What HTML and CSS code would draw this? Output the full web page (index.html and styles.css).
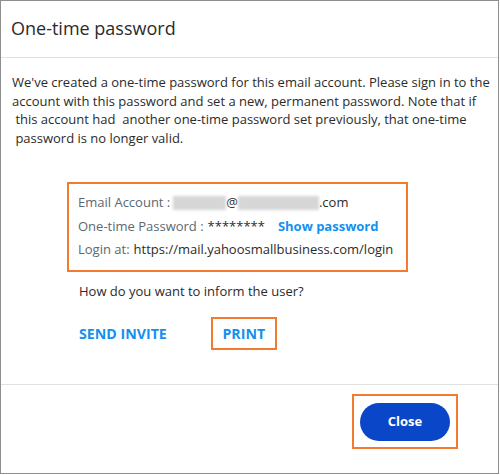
FILE: index.html
```html
<!DOCTYPE html>
<html>
<head>
<meta charset="utf-8">
<link rel="stylesheet" href="styles.css">
</head>
<body>
<div class="dialog">
  <div class="header">
    <h1 class="title">One-time password</h1>
  </div>
  <div class="main">
    <p class="intro">We've created a one-time password for this email account. Please sign in to the<br>account with this password and set a new, permanent password. Note that if<br>&nbsp;this account had &nbsp;another one-time password set previously, that one-time<br>&nbsp;password is no longer valid.</p>
    <div class="details">
      <div class="row"><span class="label">Email Account :</span><span class="blur blur-a"></span><span class="value">@</span><span class="blur blur-b"></span><span class="value">.com</span></div>
      <div class="row"><span class="label">One-time Password :</span> <span class="value">********</span><a class="show-link">Show password</a></div>
      <div class="row"><span class="label">Login at:</span> <span class="value">https://mail.yahoosmallbusiness.com/login</span></div>
    </div>
    <p class="question">How do you want to inform the user?</p>
    <div class="actions">
      <a class="action">SEND INVITE</a>
      <span class="highlight print-box"><a class="action">PRINT</a></span>
    </div>
  </div>
  <div class="footer">
    <span class="highlight close-box"><button class="close-btn">Close</button></span>
  </div>
</div>
</body>
</html>
```
FILE: styles.css
```css
html, body {
  margin: 0;
  padding: 0;
  background: #ffffff;
}
body {
  font-family: "Open Sans", "Noto Sans", sans-serif;
  color: #2b2b2b;
}
.dialog {
  width: 499px;
  height: 474px;
  box-sizing: border-box;
  border: 1px solid #8e8e8e;
  display: flex;
  flex-direction: column;
}
.header {
  height: 56px;
  border-bottom: 1px solid #e2e2e2;
  display: flex;
  align-items: center;
  padding-left: 10px;
}
.title {
  margin: 0;
  font-size: 18px;
  font-weight: 400;
  color: #2b2b2b;
  padding-bottom: 2px;
}
.main {
  flex: 1;
  padding: 15px 0 0 11px;
  border-bottom: 1px solid #e2e2e2;
}
.intro {
  margin: 0;
  font-size: 13px;
  line-height: 18.5px;
  color: #2b2b2b;
}
.details {
  margin: 35px 0 0 55px;
  width: 341px;
  height: 90px;
  box-sizing: border-box;
  border: 2px solid #f47a2e;
  padding: 7px 0 0 9px;
  font-size: 13px;
}
.row {
  height: 23.5px;
  line-height: 23.5px;
  white-space: nowrap;
  display: flex;
  align-items: center;
}
.label {
  color: #5d6772;
  margin-right: 4px;
}
.value {
  color: #2b2b2b;
}
.blur {
  display: inline-block;
  height: 14px;
  background: #d6d6d6;
  filter: blur(1.5px);
}
.blur-a { width: 53px; margin-left: -1px; }
.blur-b { width: 81px; }
.show-link {
  color: #1490f0;
  font-weight: 700;
  margin-left: 13px;
}
.question {
  margin: 10px 0 0 67px;
  font-size: 13px;
  line-height: 18px;
  color: #2b2b2b;
}
.actions {
  margin: 17px 0 0 56px;
  display: flex;
  align-items: center;
}
.action {
  font-size: 14.2px;
  font-weight: 700;
  color: #1490f0;
  padding: 0 11px;
}
.highlight {
  border: 2px solid #f47a2e;
  box-sizing: border-box;
  display: inline-flex;
  align-items: center;
  justify-content: center;
}
.print-box {
  margin-left: 33px;
  width: 66px;
  height: 33px;
}
.footer {
  height: 88px;
  display: flex;
  justify-content: flex-end;
  align-items: flex-start;
  padding-right: 40px;
}
.close-box {
  margin-top: 9px;
  width: 106px;
  height: 55px;
}
.close-btn {
  width: 90px;
  height: 38px;
  border: none;
  border-radius: 19px;
  background: #0a46c8;
  color: #ffffff;
  font-family: "Open Sans", "Noto Sans", sans-serif;
  font-size: 13px;
  font-weight: 700;
  line-height: 36px;
  padding: 0 0 2px 0;
  cursor: pointer;
}
```
